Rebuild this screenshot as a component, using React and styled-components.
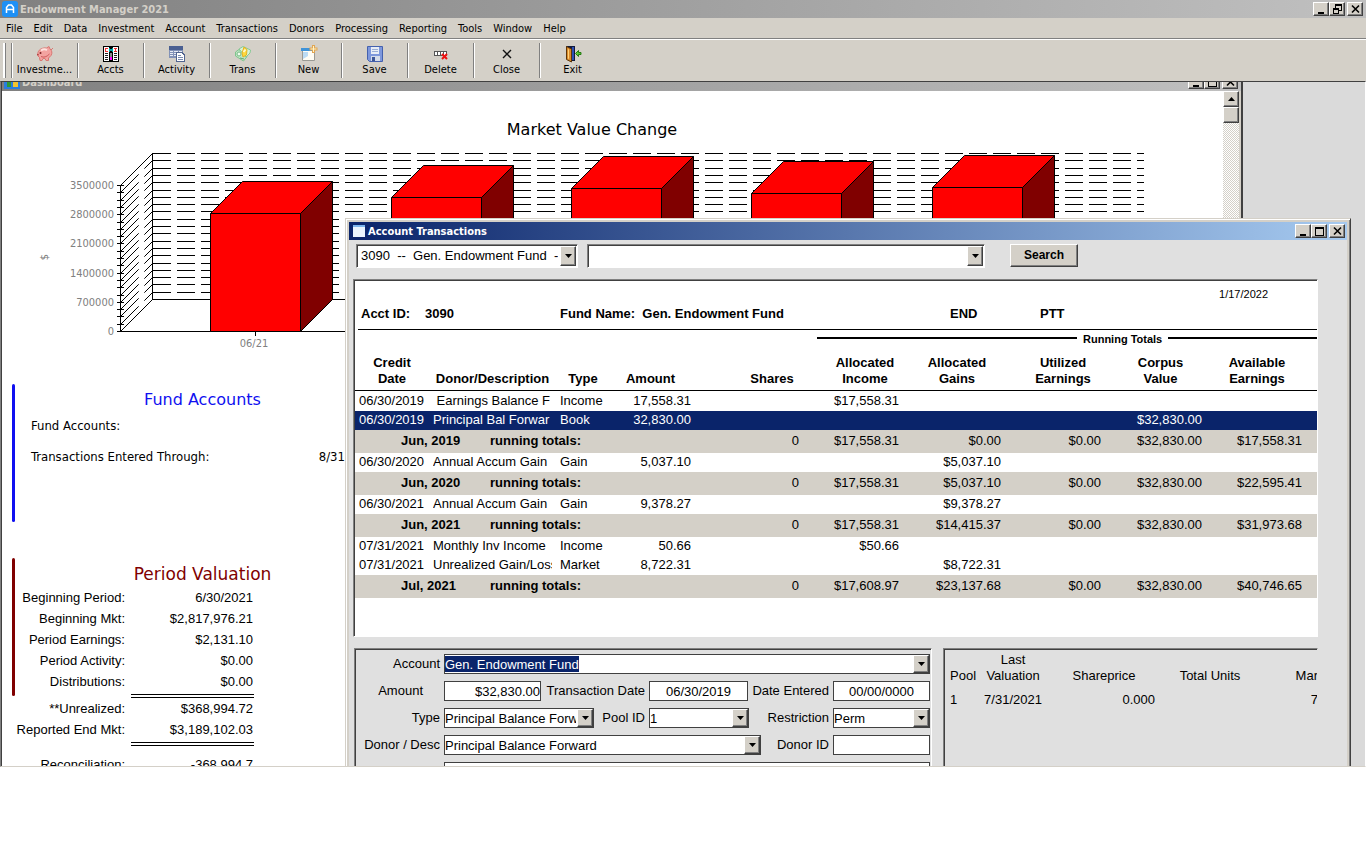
import styled, { createGlobalStyle, css } from 'styled-components'

const ui = '"DejaVu Sans Condensed", "DejaVu Sans", sans-serif'
const face = '#d4d0c8'
const panel = '#e0e0e0'
const navy = '#0a246a'

const menus = ['File', 'Edit', 'Data', 'Investment', 'Account', 'Transactions', 'Donors', 'Processing', 'Reporting', 'Tools', 'Window', 'Help']

// chart geometry: back wall is shifted 32px right and up from the front
const bars = [
  { x: 210, top: 213 },
  { x: 391, top: 197 },
  { x: 571, top: 188 },
  { x: 751, top: 193 },
  { x: 932, top: 187 },
]
const axis = ['0', '700000', '1400000', '2100000', '2800000', '3500000']

const valuation = [
  ['Beginning Period:', '6/30/2021'],
  ['Beginning Mkt:', '$2,817,976.21'],
  ['Period Earnings:', '$2,131.10'],
  ['Period Activity:', '$0.00'],
  ['Distributions:', '$0.00', true],
  ['**Unrealized:', '$368,994.72'],
  ['Reported End Mkt:', '$3,189,102.03', true],
]

const rows = [
  { date: '06/30/2019', desc: '\u00a0Earnings Balance F', type: 'Income', nums: ['17,558.31', '', '$17,558.31', '', '', '', ''] },
  { date: '06/30/2019', desc: 'Principal Bal Forwar', type: 'Book', selected: true, nums: ['32,830.00', '', '', '', '', '$32,830.00', ''] },
  { total: 'Jun, 2019', nums: ['0', '$17,558.31', '$0.00', '$0.00', '$32,830.00', '$17,558.31'] },
  { date: '06/30/2020', desc: 'Annual Accum Gain', type: 'Gain', nums: ['5,037.10', '', '', '$5,037.10', '', '', ''] },
  { total: 'Jun, 2020', nums: ['0', '$17,558.31', '$5,037.10', '$0.00', '$32,830.00', '$22,595.41'] },
  { date: '06/30/2021', desc: 'Annual Accum Gain', type: 'Gain', nums: ['9,378.27', '', '', '$9,378.27', '', '', ''] },
  { total: 'Jun, 2021', nums: ['0', '$17,558.31', '$14,415.37', '$0.00', '$32,830.00', '$31,973.68'] },
  { date: '07/31/2021', desc: 'Monthly Inv Income', type: 'Income', nums: ['50.66', '', '$50.66', '', '', '', ''] },
  { date: '07/31/2021', desc: 'Unrealized Gain/Loss', type: 'Market', nums: ['8,722.31', '', '', '$8,722.31', '', '', ''] },
  { total: 'Jul, 2021', nums: ['0', '$17,608.97', '$23,137.68', '$0.00', '$32,830.00', '$40,746.65'] },
]

function Chart() {
  const lines = Array.from({ length: 21 }, (_, i) => Math.round(331 - i * 7.3))
  return (
    <ChartSvg viewBox="2 145 1200 215" width="1200" height="215" role="img" aria-label="Market Value Change">
      <g stroke="#000" fill="none" shapeRendering="crispEdges">
        {lines.map((y, i) => (
          <g key={y}>
            <path d={`M117 ${y}.5H124`} />
            <path d={`M121 ${y}L153 ${y - 32}`} strokeDasharray={i === 0 || i === 20 ? 'none' : '25 8'} shapeRendering="auto" />
            {i > 0 && <path d={`M153 ${y - 32}.5H1144`} strokeDasharray="18 6" />}
          </g>
        ))}
        <path d="M120.500 185V331.500H1112L1144 299.500H152.500V153" />
        <path d="M255.500 331V336" />
      </g>
      {bars.map(({ x, top }) => (
        <g key={x} stroke="#000" strokeWidth="1">
          <path fill="#f00" d={`M${x}.5 ${top}.5L${x + 32}.5 ${top - 32}.5H${x + 122}.5L${x + 90}.5 ${top}.5Z`} />
          <path fill="#800000" d={`M${x + 90}.5 ${top}.5L${x + 122}.5 ${top - 32}.5V299.500L${x + 90}.5 331.500Z`} />
          <path fill="#f00" d={`M${x}.5 ${top}.5H${x + 90}.5V331.500H${x}.5Z`} />
        </g>
      ))}
      <g fill="#808080" fontSize="11" textAnchor="end">
        {axis.map((label, i) => (
          <text key={label} x="114" y={Math.round(335 - i * 29.2)}>{label}</text>
        ))}
        <text x="254" y="347" textAnchor="middle">06/21</text>
        <text transform="translate(48 257) rotate(-90)" textAnchor="middle">$</text>
      </g>
    </ChartSvg>
  )
}

const icons = {
  pig: (
    <svg width="18" height="18" viewBox="0 0 18 18">
      <path d="M2 7.500C3 4 7 2.500 10.500 3L13 1.500L14 4C16 5.500 16.500 8 15 10.500L12.500 13V15.500H10L9 13.500H7L6 15.500H4L3.500 12.500L1.500 10.500Z" fill="#f3a3a0" stroke="#d97672" />
      <path d="M5 5.500Q8 3.500 11 5" stroke="#ffe3e0" strokeWidth="2" fill="none" />
      <path d="M5 11.500Q9 13.500 13.500 9" stroke="#cf5a5a" fill="none" />
      <circle cx="4.500" cy="8" r="1" fill="#7b2222" />
      <path d="M1 9.500L3 10" stroke="#a83c3c" />
      <path d="M15 5L17 3" stroke="#d97672" />
    </svg>
  ),
  accts: (
    <svg width="16" height="16" viewBox="0 0 16 16" shapeRendering="crispEdges">
      <path fill="#000" d="M0 0H16V16H0Z" />
      <path fill="#fff" d="M1 1H6V15H1ZM10 1H15V15H10Z" />
      <path fill="#e33" d="M2 2H5V3H3V5H5V6H2ZM11 2H14V3H13V5H14V6H11V5H12V3H11Z" />
      <path fill="#0aa" d="M6 2H7V6H6ZM9 2H10V6H9ZM7 3H9V5H7Z" />
      <path stroke="#222" d="M2 7.500H5M2 9.500H5M2 11.500H5M2 13.500H5M11 7.500H14M11 9.500H14M11 11.500H14M11 13.500H14" />
      <path fill="#888" d="M7 7H9V11H7Z" />
      <path fill="#f0f" d="M7 11H9V14H7Z" />
    </svg>
  ),
  activity: (
    <svg width="18" height="18" viewBox="0 0 18 18" shapeRendering="crispEdges">
      <path fill="#4a5f91" d="M1 1H15V5H1Z" />
      <path fill="#8292b7" d="M1 5H15V13H1Z" />
      <path stroke="#e8ecf5" d="M2 6.500H5M6 6.500H10M11 6.500H14M2 8.500H5M6 8.500H8M2 10.500H5M6 10.500H8" />
      <path fill="#fff" stroke="#52658f" d="M8.500 7.500H14L16.500 10V16.500H8.500Z" />
      <path stroke="#7a8bb0" d="M10 10.500H13M10 12.500H15M10 14.500H15" />
    </svg>
  ),
  trans: (
    <svg width="18" height="18" viewBox="0 0 18 18">
      <path fill="#bfe6c4" stroke="#7fc48d" d="M1.500 7L5 4.500L13 11.500L9.500 16L1.500 11Z" />
      <path fill="#d8f3da" stroke="#88c995" d="M5 4L9 1.500L16.500 5L16 8L12 12Z" />
      <circle cx="5" cy="9" r="2" fill="#effbef" stroke="#78b985" />
      <path d="M6 13L10 14" stroke="#62a571" />
      <path fill="#ffd83d" stroke="#e3b423" d="M10 2L13 4.500L12.500 10L9 12L8 8Z" />
      <path d="M9.500 7L11.500 4.500" stroke="#fff9cf" strokeWidth="2" />
    </svg>
  ),
  create: (
    <svg width="18" height="18" viewBox="0 0 18 18">
      <path fill="#fffdf4" stroke="#9a9a94" d="M2.500 4.500H14.500V15.500H2.500Z" />
      <path fill="#3f93d8" d="M1 3H12V6H1Z" />
      <path fill="#bcdcf4" d="M3 7H8V11L3 14Z" />
      <path stroke="#e1a552" strokeWidth="3" d="M13.500 0V8M9.500 4H17.500" />
      <path stroke="#fff6c8" d="M13.500 1V7M10.500 4H16.500" />
    </svg>
  ),
  save: (
    <svg width="16" height="16" viewBox="0 0 16 16">
      <path fill="#7d97dc" stroke="#4461ae" d="M.5.5H15.500V15.500H2.500L.5 13.500Z" />
      <path fill="#e8edf6" d="M4 1H12V8H4Z" />
      <path stroke="#9aaed8" d="M5 3.500H11M5 5.500H11" />
      <path fill="#d5dcea" d="M4 10H13V15H4Z" />
      <path fill="#3d5698" d="M5 11H8V15H5Z" />
    </svg>
  ),
  remove: (
    <svg width="18" height="18" viewBox="0 0 18 18" shapeRendering="crispEdges">
      <path fill="#fff" stroke="#555" d="M2.500 6.500H14.500V10.500H2.500Z" />
      <path stroke="#555" d="M5.500 6V11M8.500 6V11M11.500 6V11" />
      <path stroke="#e11" strokeWidth="2" shapeRendering="auto" d="M10 9L15 14M15 9L10 14" />
    </svg>
  ),
  close: (
    <svg width="18" height="18" viewBox="0 0 18 18">
      <path stroke="#111" strokeWidth="1.400" d="M5 5L13 13M13 5L5 13" />
    </svg>
  ),
  exit: (
    <svg width="18" height="18" viewBox="0 0 18 18">
      <path fill="#111a3c" d="M2 1H11V16H5Z" />
      <path fill="#2d4fb5" d="M8 2H10V15H8Z" />
      <path fill="#d98a2b" stroke="#5d3508" d="M2.500 1.500L7.500 4V17L2.500 14.500Z" />
      <path fill="#ffd27a" d="M4 4L5 4.500V14L4 13.500Z" />
      <path fill="#58c632" stroke="#237a10" d="M11.500 8.500L14.500 5.500V7.500H17V9.500H14.500V11.500Z" />
    </svg>
  ),
}

const tools = [
  ['Investme...', icons.pig],
  ['Accts', icons.accts],
  ['Activity', icons.activity],
  ['Trans', icons.trans],
  ['New', icons.create],
  ['Save', icons.save],
  ['Delete', icons.remove],
  ['Close', icons.close],
  ['Exit', icons.exit],
]

const glyphs = {
  Minimize: <path fill="#000" d="M2 8H8V10H2Z" />,
  Maximize: <path fill="#000" d="M1 1H10V10H1ZM2 3V9H9V3Z" fillRule="evenodd" />,
  Restore: <path fill="#000" d="M3 0H10V7H7V10H1V4H3ZM4 2V4H7V6H9V2ZM2 6V9H6V6Z" fillRule="evenodd" />,
  Close: <path stroke="#000" strokeWidth="1.600" d="M2 1.500L9 8.500M9 1.500L2 8.500" />,
}

function WindowButtons({ restore }) {
  return (
    <WinButtons>
      {['Minimize', restore ? 'Restore' : 'Maximize', 'Close'].map((name) => (
        <WinButton key={name} aria-label={name}>
          <svg width="11" height="10" viewBox="0 0 11 10">{glyphs[name]}</svg>
        </WinButton>
      ))}
    </WinButtons>
  )
}

function Combo({ id, value, label, width, flat, marked }) {
  return (
    <ComboBox $width={width} $flat={flat}>
      <Select id={id} aria-label={label} defaultValue={value} $flat={flat} $marked={marked}>
        <option>{value}</option>
      </Select>
      <Arrow $flat={flat}>
        <svg width="7" height="4" viewBox="0 0 7 4"><path d="M0 0H7L3.500 4Z" /></svg>
      </Arrow>
    </ComboBox>
  )
}

function App() {
  return (
    <Screen>
      <Global />
      <TitleBar>
        <svg width="16" height="16" viewBox="0 0 16 16">
          <rect width="16" height="16" rx="3" fill="#1e90f5" />
          <path d="M4.500 12V6.500L6.500 4H9.500L11.500 6.500V12M4.500 8.500H11.500" stroke="#fff" strokeWidth="1.500" fill="none" />
        </svg>
        <Caption>Endowment Manager 2021</Caption>
        <WindowButtons restore />
      </TitleBar>
      <MenuBar>
        {menus.map((name) => <MenuItem key={name}>{name}</MenuItem>)}
      </MenuBar>
      <Toolbar>
        {tools.map(([name, icon]) => (
          <Tool key={name}>
            <ToolIcon>{icon}</ToolIcon>
            {name}
          </Tool>
        ))}
      </Toolbar>
      <Desktop>
        <Dashboard>
          <TitleBar>
            <svg width="16" height="14" viewBox="0 0 16 14">
              <path fill="#2a7de0" d="M0 0H16V14H0Z" />
              <path fill="#2c9a3a" d="M3 5H7V12H3Z" />
              <path fill="#f4c430" d="M9 2H14V12H9Z" />
            </svg>
            <Caption>Dashboard</Caption>
            <WindowButtons />
          </TitleBar>
          <DashBody>
            <DashContent>
              <ChartTitle>Market Value Change</ChartTitle>
              <Chart />
              <Card $color="#1010f0">
                <CardBody>
                  <CardTitle>Fund Accounts</CardTitle>
                  <Fact><span>Fund Accounts:</span></Fact>
                  <Fact><span>Transactions Entered Through:</span><span>8/31</span></Fact>
                </CardBody>
              </Card>
              <Card $color="#800000">
                <CardBody>
                  <CardTitle $large>Period Valuation</CardTitle>
                  <Valuation>
                    <tbody>
                      {valuation.map(([label, value, ruled]) => (
                        <tr key={label}>
                          <th scope="row">{label}</th>
                          <Money $ruled={ruled}>{value}</Money>
                        </tr>
                      ))}
                    </tbody>
                    <tfoot>
                      <tr>
                        <th scope="row">Reconciliation:</th>
                        <Money>-368,994.7</Money>
                      </tr>
                    </tfoot>
                  </Valuation>
                </CardBody>
              </Card>
            </DashContent>
            <ScrollBar>
              <ScrollPart><svg width="7" height="4" viewBox="0 0 7 4"><path d="M0 4H7L3.500 0Z" /></svg></ScrollPart>
              <ScrollPart />
            </ScrollBar>
          </DashBody>
        </Dashboard>
        <AccountWindow>
          <TitleBar $active>
            <svg width="12" height="12" viewBox="0 0 12 12">
              <path fill="#eaf4fd" d="M0 0H12V12H0Z" />
              <path fill="#7db5ec" d="M0 0H12V2H0Z" />
            </svg>
            <Caption $active>Account Transactions</Caption>
            <WindowButtons />
          </TitleBar>
          <WindowBody>
            <SearchRow>
              <Combo label="Account" value="3090&nbsp; --&nbsp; Gen. Endowment Fund&nbsp; -" width={222} />
              <Combo label="Search text" value="" width={398} />
              <SearchButton>Search</SearchButton>
            </SearchRow>
            <Report>
              <ReportDate>1/17/2022</ReportDate>
              <ReportHead>
                <span>Acct ID:</span>
                <span>3090</span>
                <span>Fund Name:&nbsp; Gen. Endowment Fund</span>
                <span>END</span>
                <span>PTT</span>
              </ReportHead>
              <Running>Running Totals</Running>
              <Ledger>
                <colgroup>
                  {[74, 127, 64, 71, 108, 100, 102, 100, 101, 100].map((w, i) => <Col key={i} $w={w} />)}
                  <col />
                </colgroup>
                <thead>
                  <tr>
                    <Th>Credit<br />Date</Th>
                    <Th>Donor/Description</Th>
                    <Th $inset={-10}>Type</Th>
                    <Th $inset={-10}>Amount</Th>
                    <Th $inset={54}>Shares</Th>
                    <Th $inset={32}>Allocated<br />Income</Th>
                    <Th $inset={14}>Allocated<br />Gains</Th>
                    <Th $inset={24}>Utilized<br />Earnings</Th>
                    <Th $inset={18}>Corpus<br />Value</Th>
                    <Th $inset={10}>Available<br />Earnings</Th>
                    <Th />
                  </tr>
                </thead>
                <tbody>
                  {rows.map((r, i) => r.total ? (
                    <TotalRow key={i}>
                      <td colSpan={4}><TotalLabel><b>{r.total}</b><b>running totals:</b></TotalLabel></td>
                      {r.nums.map((n, j) => <Num key={j}>{n}</Num>)}
                      <td />
                    </TotalRow>
                  ) : (
                    <EntryRow key={i} $selected={r.selected}>
                      <td>{r.date}</td>
                      <td><Clip>{r.desc}</Clip></td>
                      <td>{r.type}</td>
                      {r.nums.map((n, j) => <Num key={j}>{n}</Num>)}
                      <td />
                    </EntryRow>
                  ))}
                </tbody>
              </Ledger>
            </Report>
            <Bottom>
              <Form onSubmit={(e) => e.preventDefault()}>
                <FormRow>
                  <Label htmlFor="account" $w={85}>Account</Label>
                  <Combo id="account" value="Gen. Endowment Fund" width={486} flat marked />
                </FormRow>
                <FormRow>
                  <Label htmlFor="amount" $w={85} $far>Amount</Label>
                  <Field id="amount" defaultValue="$32,830.00" $w={97} $align="right" />
                  <Label htmlFor="tdate" $w={100}>Transaction Date</Label>
                  <Field id="tdate" defaultValue="06/30/2019" $w={99} $align="center" />
                  <Label htmlFor="entered" $w={77}>Date Entered</Label>
                  <Field id="entered" defaultValue="00/00/0000" $w={97} $align="center" />
                </FormRow>
                <FormRow>
                  <Label htmlFor="type" $w={85}>Type</Label>
                  <Combo id="type" value="Principal Balance Forward" width={150} flat />
                  <Label htmlFor="pool" $w={47}>Pool ID</Label>
                  <Combo id="pool" value="1" width={100} flat />
                  <Label htmlFor="restriction" $w={76}>Restriction</Label>
                  <Combo id="restriction" value="Perm" width={97} flat />
                </FormRow>
                <FormRow>
                  <Label htmlFor="donor" $w={85}>Donor / Desc</Label>
                  <Combo id="donor" value="Principal Balance Forward" width={317} flat />
                  <Label htmlFor="donorid" $w={64}>Donor ID</Label>
                  <Field id="donorid" $w={97} />
                </FormRow>
                <FormRow>
                  <Label htmlFor="description" $w={85}>Description</Label>
                  <Field id="description" $w={486} />
                </FormRow>
              </Form>
              <Pools>
                <PoolTable>
                  <colgroup>
                    <Col $w={29} /><Col $w={68} /><Col $w={114} /><Col $w={98} /><Col $w={60} />
                  </colgroup>
                  <thead>
                    <tr><th>Pool</th><th>Last<br />Valuation</th><th>Shareprice</th><th>Total Units</th><th>Mar</th></tr>
                  </thead>
                  <tbody>
                    <tr><td>1</td><td>7/31/2021</td><td>0.000</td><td /><td>7</td></tr>
                  </tbody>
                </PoolTable>
              </Pools>
            </Bottom>
          </WindowBody>
        </AccountWindow>
      </Desktop>
    </Screen>
  )
}

const Global = createGlobalStyle`
  * {
    box-sizing: border-box;
  }
  body {
    margin: 0;
    background: #fff;
    color: #000;
    font: 13px "Liberation Sans", Arial, sans-serif;
    overflow: hidden;
  }
  button, input, select {
    font: inherit;
    color: inherit;
    border-radius: 0;
    margin: 0;
    padding: 0;
  }
  table {
    border-collapse: collapse;
  }
  th, td {
    padding: 0;
    white-space: nowrap;
  }
`

const raised = css`
  border: 1px solid;
  border-color: #fff #404040 #404040 #fff;
  box-shadow: inset -1px -1px 0 #808080;
  background: ${face};
`
const sunken = css`
  border: 1px solid;
  border-color: #808080 #fff #fff #808080;
  box-shadow: inset 1px 1px 0 #404040;
`

const Screen = styled.div`
  display: flex;
  flex-direction: column;
  height: calc(100vh - 83px);
  overflow: hidden;
  background: ${face};
`
const TitleBar = styled.header`
  display: flex;
  align-items: center;
  flex: none;
  gap: 2px;
  height: 18px;
  padding: 0 3px 0 2px;
  background: linear-gradient(90deg, #808080, #c0c0c0);
  ${(p) => p.$active && css`
    gap: 3px;
    padding: 0 2px 0 4px;
    background: linear-gradient(90deg, ${navy}, #a6caf0);
  `}
`
const Caption = styled.span`
  flex: 1;
  font: bold 11px ${ui};
  color: ${(p) => (p.$active ? '#fff' : face)};
`
const WinButtons = styled.div`
  display: flex;
`
const WinButton = styled.button`
  ${raised}
  display: grid;
  place-items: center;
  width: 16px;
  height: 14px;
  &:last-child {
    margin-left: 2px;
  }
`
const MenuBar = styled.nav`
  display: flex;
  flex: none;
  gap: 11px;
  height: 20px;
  padding: 0 6px;
`
const MenuItem = styled.button`
  border: 0;
  background: none;
  font: 11px ${ui};
`
const Toolbar = styled.div`
  display: flex;
  flex: none;
  height: 43px;
  padding: 4px 0 3px 3px;
  border-top: 1px solid #808080;
  box-shadow: inset 0 1px 0 #fff;
  &::before {
    content: '';
    flex: none;
    width: 6px;
    border-left: 2px solid #fff;
    border-right: 1px solid #808080;
    box-shadow: inset 1px 0 0 #808080;
  }
`
const Tool = styled.button`
  display: flex;
  flex-direction: column;
  align-items: center;
  justify-content: flex-end;
  width: 66px;
  padding: 0 0 2px;
  border: 0;
  border-right: 1px solid #808080;
  box-shadow: inset 1px 0 0 #fff;
  background: none;
  font: 11px ${ui};
  &:last-child {
    border-right-color: transparent;
  }
`
const ToolIcon = styled.span`
  display: grid;
  place-items: center;
  height: 18px;
`
const Desktop = styled.main`
  position: relative;
  flex: 1;
  overflow: hidden;
  border: 1px solid;
  border-color: #404040 #fff ${face} #808080;
  background: #dadada;
`
const Dashboard = styled.section`
  position: absolute;
  top: -9px;
  left: 0;
  right: 122px;
  bottom: 0;
  display: flex;
  flex-direction: column;
  border: solid #404040;
  border-width: 0 2px 0 1px;
  background: ${face};
`
const DashBody = styled.div`
  display: flex;
  flex: 1;
  min-height: 0;
  padding-right: 2px;
`
const DashContent = styled.div`
  flex: 1;
  overflow: hidden;
  background: #fff;
`
const ChartTitle = styled.h2`
  width: 1180px;
  margin: 28px 0 4px;
  font: 16px/22px "DejaVu Sans", sans-serif;
  text-align: center;
`
const ChartSvg = styled.svg`
  display: block;
  font-family: ${ui};
`
const Card = styled.section`
  display: flex;
  height: 138px;
  margin: 24px 0 36px 10px;
  &::before {
    content: '';
    flex: none;
    width: 3px;
    border-radius: 2px;
    background: ${(p) => p.$color};
  }
  h3 {
    color: ${(p) => p.$color};
  }
`
const CardBody = styled.div`
  width: 375px;
  padding: 6px 0 0;
`
const CardTitle = styled.h3`
  margin: 0;
  font: ${(p) => (p.$large ? 17 : 16)}px/20px "DejaVu Sans", sans-serif;
  text-align: center;
`
const Fact = styled.div`
  display: flex;
  justify-content: space-between;
  width: 330px;
  padding: 8px 0 8px 16px;
  font: 13px/15px ${ui};
`
const Valuation = styled.table`
  margin-top: 3px;
  line-height: 21px;
  th {
    width: 116px;
    padding-right: 6px;
    font-weight: normal;
    text-align: right;
    vertical-align: top;
  }
  tfoot th, tfoot td {
    padding-top: 8px;
  }
`
const Money = styled.td`
  width: 123px;
  padding-right: 1px;
  text-align: right;
  ${(p) => p.$ruled && css`
    height: 27px;
    vertical-align: top;
    background:
      linear-gradient(#000, #000) 0 23px / 100% 1px no-repeat,
      linear-gradient(#000, #000) 0 26px / 100% 1px no-repeat;
  `}
`
const ScrollBar = styled.div`
  width: 16px;
  background: repeating-conic-gradient(#fff 0 25%, ${face} 0 50%) 0 0 / 2px 2px;
`
const ScrollPart = styled.div`
  ${raised}
  display: grid;
  place-items: center;
  height: 16px;
`
const AccountWindow = styled.section`
  position: absolute;
  top: 136px;
  left: 344px;
  right: 14px;
  bottom: -40px;
  padding: 3px;
  ${raised}
  border-color: ${face} #404040 #404040 ${face};
  box-shadow: inset 1px 1px 0 #fff, inset -1px -1px 0 #808080;
`
const WindowBody = styled.div`
  height: 100%;
  padding: 4px 29px 0 5px;
  background: ${panel};
`
const SearchRow = styled.div`
  display: flex;
  align-items: flex-start;
  gap: 9px;
  padding-left: 2px;
`
const ComboBox = styled.span`
  position: relative;
  display: flex;
  width: ${(p) => p.$width}px;
  height: ${(p) => (p.$flat ? 20 : 24)}px;
  padding: ${(p) => (p.$flat ? '0' : '1px 2px 3px')};
  ${(p) => (p.$flat ? css`border: 1px solid #404040;` : sunken)}
  background: #fff;
`
const Select = styled.select`
  flex: 1;
  min-width: 0;
  appearance: none;
  border: 0;
  padding: 0 17px 0 ${(p) => (p.$flat ? 0 : 2)}px;
  background: none;
  outline: 0;
  ${(p) => p.$marked && css`
    color: #fff;
    background: linear-gradient(${navy}, ${navy}) 0 1px / 134px 16px no-repeat;
  `}
`
const Arrow = styled.span`
  ${raised}
  position: absolute;
  top: ${(p) => (p.$flat ? 0 : 1)}px;
  right: ${(p) => (p.$flat ? 0 : 1)}px;
  bottom: ${(p) => (p.$flat ? 0 : 1)}px;
  display: grid;
  place-items: center;
  width: 16px;
  pointer-events: none;
`
const SearchButton = styled.button`
  ${raised}
  width: 68px;
  height: 23px;
  margin-left: 16px;
  font-weight: bold;
  font-size: 12px;
  line-height: 19px;
`
const Report = styled.div`
  ${sunken}
  height: 358px;
  margin: 11px 0 0 -1px;
  padding: 1px 0 0 1px;
  background: #fff;
  overflow: hidden;
`
const ReportDate = styled.div`
  padding: 7px 49px 0 0;
  font-size: 11px;
  line-height: 13px;
  text-align: right;
`
const ReportHead = styled.div`
  display: grid;
  grid-template-columns: 64px 135px 390px 90px 1fr;
  margin-left: 3px;
  padding: 4px 0 7px 3px;
  border-bottom: 1px solid #000;
  font-weight: bold;
  line-height: 17px;
`
const Running = styled.div`
  display: flex;
  gap: 6px;
  align-items: center;
  padding: 3px 0 0 462px;
  font-size: 11px;
  font-weight: bold;
  line-height: 13px;
  &::before, &::after {
    content: '';
    flex: none;
    width: 260px;
    height: 2px;
    margin-bottom: 3px;
    background: #000;
  }
  &::after {
    flex: 1;
  }
`
const Ledger = styled.table`
  width: 100%;
  table-layout: fixed;
  td {
    padding-left: 4px;
  }
`
const Col = styled.col`
  width: ${(p) => p.$w}px;
`
const Th = styled.th`
  height: 44px;
  padding-top: 8px;
  padding-bottom: 3px;
  padding-left: ${(p) => (p.$inset > 0 ? p.$inset : 0)}px;
  padding-right: ${(p) => (p.$inset < 0 ? -p.$inset : 0)}px;
  border-bottom: 1px solid #000;
  line-height: 16px;
  vertical-align: bottom;
`
const Num = styled.td`
  text-align: right;
`
const EntryRow = styled.tr`
  height: 19px;
  line-height: 17px;
  td {
    padding-bottom: 2px;
    vertical-align: bottom;
  }
  &:first-child {
    height: 21px;
  }
  ${(p) => p.$selected && css`
    color: #fff;
    background: ${navy};
  `}
`
const TotalRow = styled.tr`
  height: 23px;
  background: ${face};
  td {
    padding-bottom: 2px;
  }
`
const TotalLabel = styled.div`
  display: grid;
  grid-template-columns: 89px 1fr;
  padding-left: 42px;
`
const Clip = styled.div`
  width: 119px;
  overflow: hidden;
`
const Bottom = styled.div`
  display: flex;
  gap: 11px;
  margin-top: 11px;
`
const Form = styled.form`
  ${sunken}
  display: flex;
  flex-direction: column;
  gap: 7px;
  width: 578px;
  height: 180px;
  padding-top: 5px;
`
const FormRow = styled.div`
  display: flex;
  gap: 4px;
`
const Label = styled.label`
  flex: none;
  width: ${(p) => p.$w}px;
  padding-right: ${(p) => (p.$far ? 17 : 0)}px;
  line-height: 19px;
  text-align: right;
  white-space: nowrap;
`
const Field = styled.input`
  width: ${(p) => p.$w}px;
  height: 20px;
  border: 1px solid #404040;
  background: #fff;
  text-align: ${(p) => p.$align || 'left'};
`
const Pools = styled.div`
  ${sunken}
  flex: 1;
  min-width: 0;
  border-right-color: ${panel};
  padding: 1px 0 0 6px;
  overflow: hidden;
`
const PoolTable = styled.table`
  width: 369px;
  table-layout: fixed;
  th {
    height: 34px;
    font-weight: normal;
    line-height: 16px;
    vertical-align: bottom;
  }
  td {
    height: 30px;
    padding-right: 6px;
    text-align: right;
  }
  td:first-child {
    text-align: left;
  }
  td:nth-child(2) {
    padding-right: 0;
    text-align: center;
  }
  th:first-child {
    text-align: left;
  }
  th:last-child, td:last-child {
    padding-right: 1px;
    text-align: right;
  }
`

export default App
